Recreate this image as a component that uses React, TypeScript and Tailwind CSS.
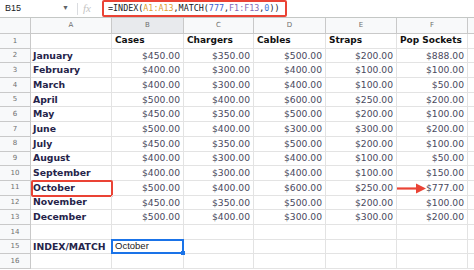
import React from 'react';

const cols = ['A', 'B', 'C', 'D', 'E', 'F'];

const rows: (string | number)[][] = [
  ['January', 450, 350, 500, 200, 888],
  ['February', 400, 300, 400, 100, 100],
  ['March', 400, 300, 400, 100, 50],
  ['April', 500, 400, 600, 250, 200],
  ['May', 450, 350, 500, 200, 100],
  ['June', 500, 400, 300, 300, 200],
  ['July', 450, 350, 500, 200, 100],
  ['August', 400, 300, 400, 100, 50],
  ['September', 400, 300, 400, 100, 150],
  ['October', 500, 400, 600, 250, 777],
  ['November', 450, 350, 500, 200, 100],
  ['December', 500, 400, 300, 300, 200],
];

const grid = 'grid grid-cols-[31px_81px_72px_70px_72px_71px_71px_6px]';
const cell = 'h-[14.7px] border-r border-b border-[#e3e3e3] flex items-center overflow-visible whitespace-nowrap';
const rowNum = 'h-[14.7px] border-r border-b border-[#c9c9c9] bg-[#f8f9fa] flex items-center justify-center text-[7px] text-[#6f6f6f]';

function money(v: number) {
  return '$' + v.toFixed(2);
}

function FormulaBar() {
  return (
    <div className="flex h-[18px] items-center border-b border-[#c4c7c5] bg-white">
      <div className="flex w-[77px] items-center justify-between pl-[5px] pr-[8px] text-[9px] text-[#202124] font-['Liberation_Sans',sans-serif]">
        <span>B15</span>
        <span className="text-[7px] text-[#5f6368]">▼</span>
      </div>
      <div className="h-[12px] w-px bg-[#dadce0]" />
      <div className="w-[24px] pl-[5px] text-[11px] italic text-[#c4c4c4] font-['Liberation_Serif',serif]">fx</div>
      <div className="flex h-[17px] w-[185px] items-center self-start rounded-[2px] border-2 border-[#ea4335] pl-[4px] text-[8.4px] text-[#202124] font-['DejaVu_Sans_Mono',monospace]">
        <span>=INDEX(</span>
        <span className="text-[#e0a030]">A1:A13</span>
        <span>,MATCH(</span>
        <span className="text-[#3c5ccf]">777</span>
        <span>,</span>
        <span className="text-[#8467b4]">F1:F13</span>
        <span>,</span>
        <span className="text-[#3c78d8]">0</span>
        <span>))</span>
      </div>
    </div>
  );
}

export default function App() {
  return (
    <div className="h-[270px] w-[474px] overflow-hidden bg-white font-['DejaVu_Sans',sans-serif]">
      <FormulaBar />
      <div className={grid}>
        <div className="h-[16px] border-r border-b border-[#c9c9c9] bg-[#f8f9fa]" />
        {cols.map((c) => (
          <div
            key={c}
            className={`flex h-[16px] items-center justify-center border-r border-b border-[#c9c9c9] text-[7px] text-[#6f6f6f] ${c === 'B' ? 'bg-[#e8eaed]' : 'bg-[#f8f9fa]'}`}
          >
            {c}
          </div>
        ))}
        <div className="h-[16px] border-b border-[#c9c9c9] bg-[#f8f9fa]" />

        <div className={rowNum}>1</div>
        <div className={cell} />
        {['Cases', 'Chargers', 'Cables', 'Straps', 'Pop Sockets'].map((h) => (
          <div key={h} className={`${cell} pl-[3px] text-[9px] font-bold text-[#111]`}>
            {h}
          </div>
        ))}
        <div className="h-[14.7px] border-b border-[#e3e3e3]" />

        {rows.map((r, i) => {
          const n = i + 2;
          return (
            <React.Fragment key={n}>
              <div className={rowNum}>{n}</div>
              <div className={`${cell} relative pl-[2px] text-[9.3px] font-bold text-[#25244a]`}>
                {r[0]}
                {r[0] === 'October' && (
                  <div className="absolute left-0 top-[-1px] h-[17px] w-[82px] rounded-[2px] border-2 border-[#ea4335]" />
                )}
              </div>
              {r.slice(1).map((v, j) => (
                <div key={j} className={`${cell} relative justify-end pr-[3px] text-[9.2px] text-[#4a4960]`}>
                  {j === 4 && v === 777 && (
                    <svg className="absolute left-0 top-[2px]" width="30" height="11" viewBox="0 0 30 11">
                      <line x1="0" y1="5.5" x2="21" y2="5.5" stroke="#ea4335" strokeWidth="2.2" />
                      <polygon points="19,0.5 29,5.5 19,10.5" fill="#ea4335" />
                    </svg>
                  )}
                  {money(v as number)}
                </div>
              ))}
              <div className="h-[14.7px] border-b border-[#e3e3e3]" />
            </React.Fragment>
          );
        })}

        <div className={rowNum}>14</div>
        {cols.map((c) => (
          <div key={c} className={cell} />
        ))}
        <div className="h-[14.7px] border-b border-[#e3e3e3]" />

        <div className={`${rowNum} bg-[#e8eaed]`}>15</div>
        <div className={`${cell} pl-[2px] text-[9.3px] font-bold text-[#25244a]`}>INDEX/MATCH</div>
        <div className={`${cell} relative`}>
          <div className="absolute left-[-1px] top-[-1px] flex h-[15.7px] w-[73px] items-center border-2 border-[#1a73e8] pl-[2px] text-[9.5px] text-[#202124] font-['Liberation_Sans',sans-serif]">
            October
            <div className="absolute bottom-[-3px] right-[-3px] h-[4px] w-[4px] bg-[#1a73e8]" />
          </div>
        </div>
        {cols.slice(2).map((c) => (
          <div key={c} className={cell} />
        ))}
        <div className="h-[14.7px] border-b border-[#e3e3e3]" />

        <div className={rowNum}>16</div>
        {cols.map((c) => (
          <div key={c} className={cell} />
        ))}
        <div className="h-[14.7px] border-b border-[#e3e3e3]" />
      </div>
    </div>
  );
}
